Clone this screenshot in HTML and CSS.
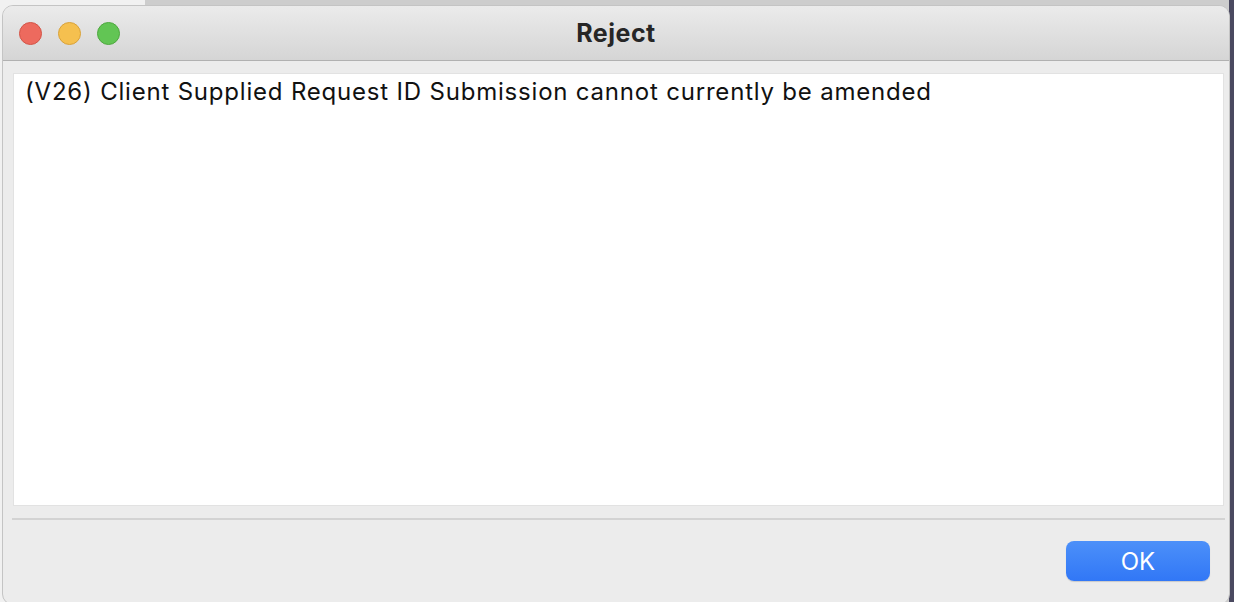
FILE: index.html
```html
<!DOCTYPE html>
<html>
<head>
<meta charset="utf-8">
<link rel="stylesheet" href="styles.css">
</head>
<body>
<div class="window">
  <div class="titlebar">
    <div class="lights">
      <span class="light red"></span>
      <span class="light yellow"></span>
      <span class="light green"></span>
    </div>
    <div class="title">Reject</div>
  </div>
  <div class="content">
    <div class="textbox">(V26) Client Supplied Request ID Submission cannot currently be amended</div>
    <div class="separator"></div>
    <div class="actions">
      <button class="ok">OK</button>
    </div>
  </div>
</div>
</body>
</html>
```

FILE: styles.css
```css
html, body {
  margin: 0;
  padding: 0;
  height: 602px;
  overflow: hidden;
}
body {
  background:
    linear-gradient(to right, transparent 1229px, #4a4960 1229px),
    linear-gradient(to right, #f1f1f1 145px, #cdcdcd 145px);
  font-family: Inter, "Noto Sans", sans-serif;
  padding: 5px 0 0 2px;
  box-sizing: border-box;
}
.window {
  width: 1228px;
  height: 600px;
  box-sizing: border-box;
  background: #ececec;
  border: 1px solid #c4c4c4;
  border-radius: 11px;
  overflow: hidden;
  display: flex;
  flex-direction: column;
}
.titlebar {
  height: 55px;
  flex: none;
  box-sizing: border-box;
  background: linear-gradient(#ebebeb, #d5d5d5);
  border-bottom: 1px solid #b1b1b1;
  display: flex;
  align-items: center;
  position: relative;
}
.lights {
  display: flex;
  gap: 16px;
  padding-left: 16px;
}
.light {
  width: 23px;
  height: 23px;
  border-radius: 50%;
  box-sizing: border-box;
}
.red { background: #ed6a5e; border: 1px solid #d35447; }
.yellow { background: #f5c04f; border: 1px solid #d9a23a; }
.green { background: #62c554; border: 1px solid #4ea83f; }
.title {
  position: absolute;
  left: 0;
  right: 0;
  text-align: center;
  font-weight: 700;
  font-size: 25px;
  letter-spacing: 0.5px;
  color: #262626;
}
.content {
  flex: 1;
  display: flex;
  flex-direction: column;
  padding: 12px 4px 0 10px;
}
.textbox {
  height: 433px;
  margin-right: 1px;
  box-sizing: border-box;
  background: #fff;
  border: 1px solid #e2e2e2;
  padding: 4px 11px;
  font-size: 24px;
  letter-spacing: 0.8px;
  color: #111;
  line-height: 28px;
}
.separator {
  height: 2px;
  background: #d3d3d3;
  margin: 12px 0 0 -1px;
}
.actions {
  display: flex;
  justify-content: flex-end;
  padding: 21px 15px 0 0;
}
.ok {
  width: 144px;
  height: 40px;
  border: none;
  border-radius: 8px;
  background: linear-gradient(#4c90f9, #3177f6);
  color: #fff;
  font-family: Inter, "Noto Sans", sans-serif;
  font-size: 24px;
  box-shadow: 0 1px 1px rgba(0,0,0,0.15);
  padding: 0;
}
```
